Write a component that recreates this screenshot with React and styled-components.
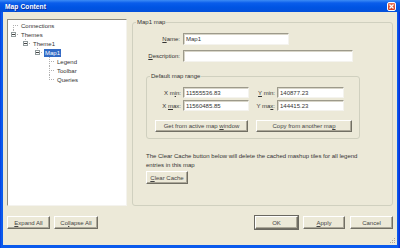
import React from 'react';
import styled, { createGlobalStyle, css } from 'styled-components';

const GlobalStyle = createGlobalStyle`
  html, body { margin: 0; padding: 0; background: #fff; }
  body { font-family: "Liberation Sans", Arial, sans-serif; }
  * { box-sizing: border-box; }
`;

const Window = styled.div`
  width: 400px;
  height: 248px;
  display: flex;
  flex-direction: column;
  background: linear-gradient(90deg, #0831D9 0px, #0A5AEC 1px, #0A5AEC 398px, #0831D9 399px);
`;

const TitleBar = styled.div`
  height: 12px;
  flex: none;
  display: flex;
  align-items: center;
  padding: 0 4px 0 5px;
  background: linear-gradient(#3D8CF5 0%, #0A5DEB 25%, #0054E3 60%, #0450DA 100%);
  color: #fff;
  font-size: 6.6px;
  font-weight: bold;
  text-shadow: 1px 1px 0 #0C2E9A;
`;

const Title = styled.span`
  flex: 1;
  letter-spacing: 0.1px;
`;

const CloseBox = styled.div`
  width: 9px;
  height: 9px;
  border: 1px solid #fff;
  border-radius: 2px;
  background: linear-gradient(#E8755A, #D2391A);
  display: flex;
  align-items: center;
  justify-content: center;
`;

const Body = styled.div`
  position: relative;
  flex: 1;
  margin: 0 3px 3px;
  background: #ECE9D8;
  padding: 7px 4px 0;
  display: flex;
  flex-direction: column;
  font-size: 6px;
  color: #333;
`;

const Main = styled.div`
  display: flex;
  gap: 5px;
  height: 187px;
`;

const TreePanel = styled.div`
  width: 120px;
  flex: none;
  background: #fff;
  border: 1px solid;
  border-color: #8E8B7E #F4F3EE #F4F3EE #8E8B7E;
  padding: 1px 0;
`;

const TreeRow = styled.div`
  display: flex;
  align-items: center;
  height: 9px;
  padding-left: ${p => p.$level * 12}px;
`;

const Joint = styled.div`
  position: relative;
  width: 10px;
  height: 9px;
  flex: none;
  &::before {
    content: '';
    position: absolute;
    left: 5px;
    right: 0;
    top: 4px;
    border-top: 1px dotted #B0B0B0;
  }
  ${p => (p.$top || p.$bottom) && css`
    &::after {
      content: '';
      position: absolute;
      left: 5px;
      top: ${p.$top ? 0 : 4}px;
      bottom: ${p.$bottom ? 0 : 4}px;
      border-left: 1px dotted #B0B0B0;
    }
  `}
`;

const Expander = styled.div`
  position: absolute;
  z-index: 1;
  left: 3px;
  top: 2px;
  width: 5px;
  height: 5px;
  border: 1px solid #919B9C;
  background: #fff;
  &::after {
    content: '';
    position: absolute;
    left: 0;
    right: 0;
    top: 1px;
    height: 1px;
    background: #444;
  }
`;

const NodeLabel = styled.span`
  margin-left: 2px;
  padding: 0 1px;
  line-height: 8px;
  white-space: nowrap;
  ${p => p.$selected && css`
    background: #316AC5;
    color: #fff;
  `}
`;

const Group = styled.fieldset`
  margin: 0;
  padding: 0;
  border: 1px solid #D0D0BF;
  border-radius: 3px;
  min-width: 0;
  ${p => p.$main && css`flex: 1;`}
  ${p => p.$inset && css`
    width: 214px;
    margin: 11px 0 0 13px;
    padding: 0 0 6px;
  `}
`;

const Legend = styled.legend`
  font-size: 6px;
  line-height: 7px;
  padding: 0 1px;
  margin-left: 3px;
  color: #333;
`;

const FormGrid = styled.div`
  display: grid;
  grid-template-columns: 47px auto;
  column-gap: 3px;
  row-gap: 5px;
  padding-top: 7px;
  align-items: center;
`;

const Label = styled.span`
  justify-self: end;
  white-space: nowrap;
`;

const Field = styled.div`
  width: ${p => p.$w}px;
  height: ${p => p.$h || 12}px;
  background: #fff;
  border: 1px solid;
  border-color: #9D9A8B #F4F3EE #F4F3EE #9D9A8B;
  box-shadow: inset 1px 1px 0 #D8D5C8;
  padding-left: 2px;
  display: flex;
  align-items: center;
  white-space: nowrap;
  color: #333;
`;

const RangeGrid = styled.div`
  display: grid;
  grid-template-columns: 34px 66px 24px 67px;
  column-gap: 2px;
  row-gap: 2px;
  padding-top: 7px;
  align-items: center;
`;

const ButtonRow = styled.div`
  display: flex;
  gap: 8px;
  margin: 9px 0 0 8px;
`;

const Button = styled.div`
  width: ${p => p.$w}px;
  height: ${p => p.$h || 12}px;
  flex: none;
  display: flex;
  align-items: center;
  justify-content: center;
  background: #ECE9D8;
  border: 1px solid;
  border-color: #FFFFFF #716F64 #716F64 #FFFFFF;
  box-shadow: inset -1px -1px 0 #ACA899;
  color: #444;
  white-space: nowrap;
  ${p => p.$default && css`
    outline: 1px solid #6A6860;
  `}
  ${p => p.$indent && css`margin: 1px 0 0 13px;`}
`;

const HelpText = styled.p`
  margin: 13px 0 0 13px;
  line-height: 9px;
  white-space: nowrap;
`;

const Footer = styled.div`
  display: flex;
  align-items: center;
  margin-top: 10px;
  gap: 4px;
`;

const Spacer = styled.div`
  flex: 1;
`;

const RightButtons = styled.div`
  display: flex;
  gap: 5px;
`;

const Grip = styled.svg`
  position: absolute;
  right: 1px;
  bottom: 1px;
`;

const tree = [
  { label: 'Connections', level: 0, bottom: true },
  { label: 'Themes', level: 0, top: true, box: true },
  { label: 'Theme1', level: 1, top: true, box: true },
  { label: 'Map1', level: 2, top: true, box: true, selected: true },
  { label: 'Legend', level: 3, top: true, bottom: true },
  { label: 'Toolbar', level: 3, top: true, bottom: true },
  { label: 'Queries', level: 3, top: true },
];

export default function App() {
  return (
    <>
      <GlobalStyle />
      <Window>
        <TitleBar>
          <Title>Map Content</Title>
          <CloseBox>
            <svg width="5" height="5" viewBox="0 0 5 5">
              <path d="M0.5 0.5 L4.5 4.5 M4.5 0.5 L0.5 4.5" stroke="#fff" strokeWidth="1.2" />
            </svg>
          </CloseBox>
        </TitleBar>
        <Body>
          <Main>
            <TreePanel>
              {tree.map(n => (
                <TreeRow key={n.label} $level={n.level}>
                  <Joint $top={n.top} $bottom={n.bottom}>
                    {n.box && <Expander />}
                  </Joint>
                  <NodeLabel $selected={n.selected}>{n.label}</NodeLabel>
                </TreeRow>
              ))}
            </TreePanel>
            <Group $main>
              <Legend>Map1 map</Legend>
              <FormGrid>
                <Label><u>N</u>ame:</Label>
                <Field $w={106}>Map1</Field>
                <Label><u>D</u>escription:</Label>
                <Field $w={170} />
              </FormGrid>
              <Group $inset>
                <Legend>Default map range</Legend>
                <RangeGrid>
                  <Label>X m<u>i</u>n:</Label>
                  <Field $w={66} $h={11}>11555536.83</Field>
                  <Label><u>Y</u> min:</Label>
                  <Field $w={67} $h={11}>140877.23</Field>
                  <Label>X <u>m</u>ax:</Label>
                  <Field $w={66} $h={11}>11560485.85</Field>
                  <Label>Y ma<u>x</u>:</Label>
                  <Field $w={67} $h={11}>144415.23</Field>
                </RangeGrid>
                <ButtonRow>
                  <Button $w={93}>Get from active map&nbsp;<u>w</u>indow</Button>
                  <Button $w={96}>Copy from another ma<u>p</u></Button>
                </ButtonRow>
              </Group>
              <HelpText>
                The Clear Cache button below will delete the cached mashup tiles for all legend
                <br />
                entries in this map
              </HelpText>
              <Button $w={42} $h={13} $indent><u>C</u>lear Cache</Button>
            </Group>
          </Main>
          <Footer>
            <Button $w={43} $h={13}><u>E</u>xpand All</Button>
            <Button $w={44} $h={13}>Co<u>l</u>lapse All</Button>
            <Spacer />
            <RightButtons>
              <Button $w={43} $h={13} $default>OK</Button>
              <Button $w={42} $h={13}><u>A</u>pply</Button>
              <Button $w={43} $h={13}>Cancel</Button>
            </RightButtons>
          </Footer>
          <Grip width="7" height="7" viewBox="0 0 7 7">
            {[[5, 1], [5, 3], [3, 3], [5, 5], [3, 5], [1, 5]].map(([x, y]) => (
              <rect key={`${x}-${y}`} x={x} y={y} width="1" height="1" fill="#ACA899" />
            ))}
          </Grip>
        </Body>
      </Window>
    </>
  );
}
